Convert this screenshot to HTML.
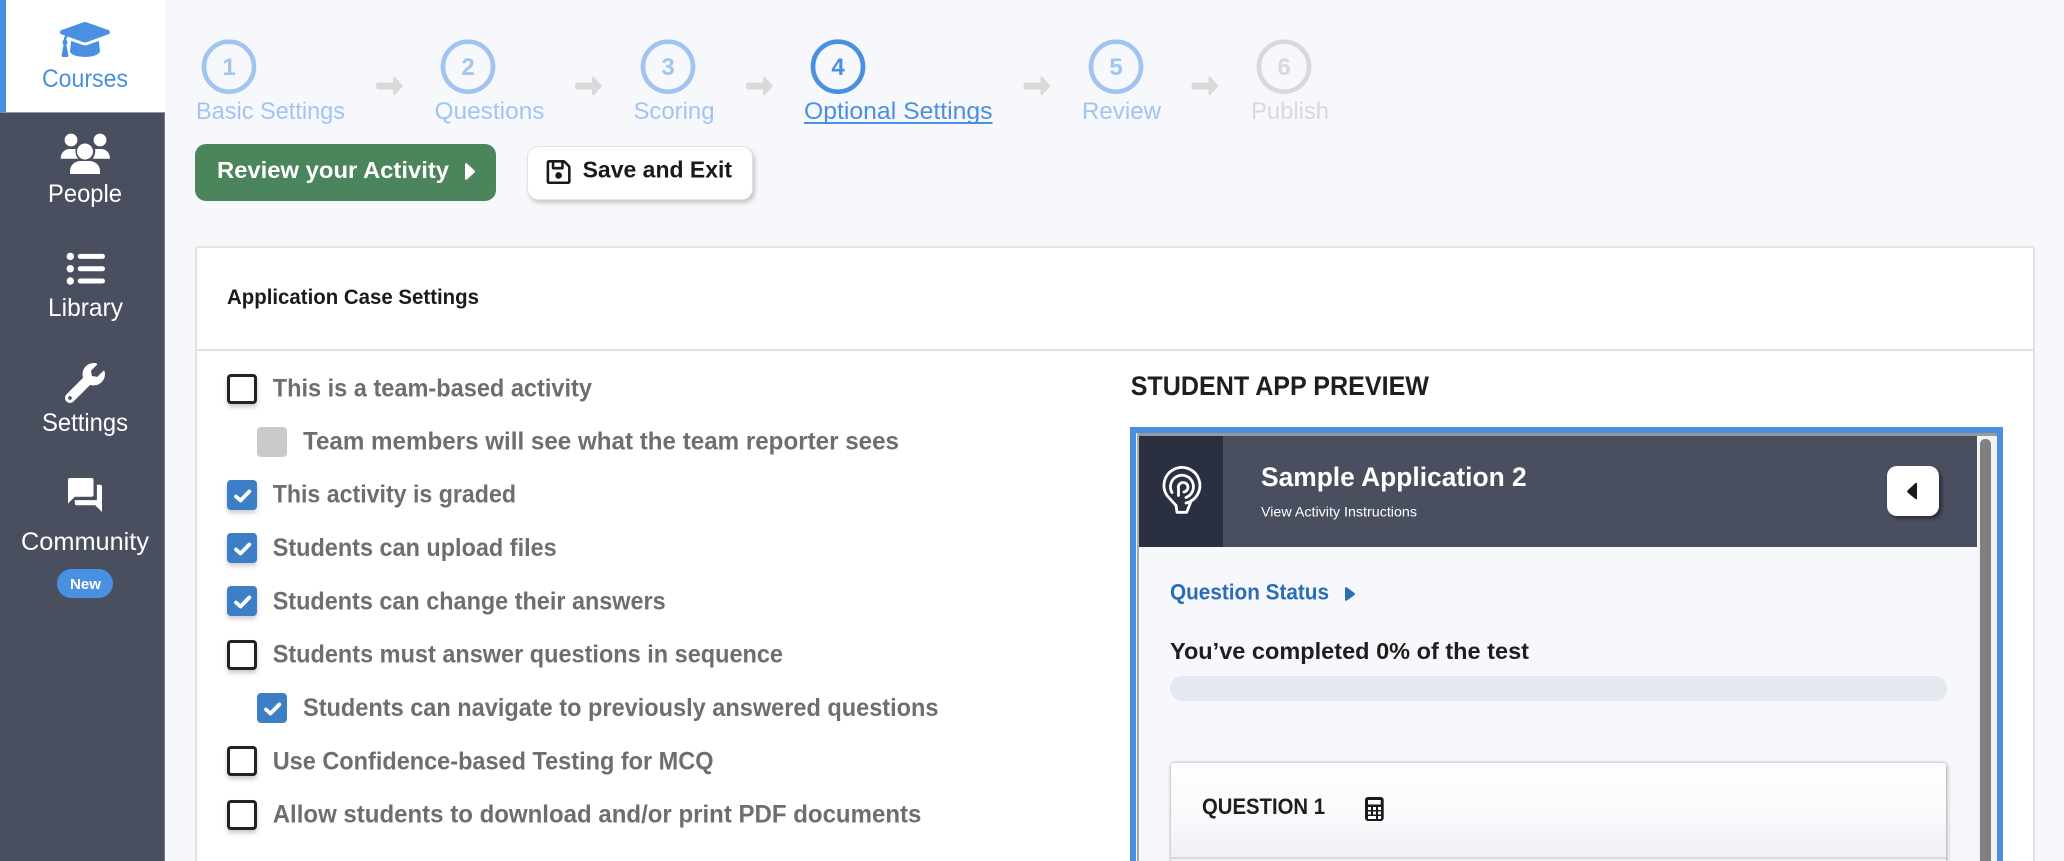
<!DOCTYPE html>
<html lang="en">
<head>
<meta charset="utf-8">
<title>Application Case Settings</title>
<style>
html,body{margin:0;padding:0;width:2064px;height:861px;overflow:hidden;background:#f7f8fb;font-family:"Liberation Sans",sans-serif}
#r{position:absolute;left:0;top:0;width:2064px;height:861px;overflow:hidden;background:#f7f8fb}
.b{position:absolute;box-sizing:border-box}
svg{position:absolute;left:0;top:0}
text{font-family:"Liberation Sans",sans-serif}
.cb{position:absolute;box-sizing:border-box;width:30px;height:30px;border-radius:4px}
.e{border:3px solid #222;background:#fff;box-shadow:0 3px 5px rgba(0,0,0,.22)}
.c{background:#3d7fc7;box-shadow:0 3px 5px rgba(0,0,0,.2)}
.d{background:#c9c9c9}
</style>
</head>
<body>
<div id="r">
<div class="b" style="left:0;top:0;width:165px;height:861px;background:#4a4f5f;border-right:1px solid #777b86"></div>
<div class="b" style="left:0;top:0;width:165px;height:113px;background:#fff;border-left:6px solid #4a90e2;border-bottom:1px solid #999"></div>

<div class="b" style="left:195px;top:246px;width:1840px;height:615px;background:#fff;border:2px solid #e3e3e6;border-bottom:0;border-radius:4px 4px 0 0"></div>
<div class="b" style="left:197px;top:349px;width:1836px;height:2px;background:#dedee0"></div>

<div class="b" style="left:195px;top:144px;width:301px;height:57px;background:#4a855c;border-radius:11px"></div>
<div class="b" style="left:527px;top:145.500px;width:226px;height:54px;background:#fff;border:1.5px solid #e2e2e2;border-radius:11px;box-shadow:2px 3px 4px rgba(0,0,0,.2)"></div>

<div class="cb e" style="left:227px;top:374px"></div>
<div class="cb d" style="left:257px;top:427px"></div>
<div class="cb c" style="left:227px;top:480px"></div>
<div class="cb c" style="left:227px;top:533px"></div>
<div class="cb c" style="left:227px;top:586px"></div>
<div class="cb e" style="left:227px;top:640px"></div>
<div class="cb c" style="left:257px;top:693px;box-shadow:none"></div>
<div class="cb e" style="left:227px;top:746px"></div>
<div class="cb e" style="left:227px;top:800px"></div>

<!-- preview -->
<div class="b" style="left:1130px;top:427px;width:873px;height:460px;background:#f1f2f3;border:6.5px solid #4a90e2"></div>
<div class="b" style="left:1137px;top:433px;width:860px;height:3px;background:#999"></div>
<div class="b" style="left:1137px;top:433px;width:2px;height:430px;background:#aaa"></div>
<div class="b" style="left:1139px;top:436px;width:838px;height:430px;background:#f7f8fb"></div>
<div class="b" style="left:1139px;top:436px;width:838px;height:111px;background:#4a4f5f"></div>
<div class="b" style="left:1139px;top:436px;width:84px;height:111px;background:#2a3040"></div>
<div class="b" style="left:1980px;top:439px;width:11px;height:430px;background:#808080;border-radius:5px"></div>
<div class="b" style="left:1887px;top:466px;width:52px;height:50px;background:#fff;border-radius:10px;box-shadow:3px 3px 3px rgba(10,10,15,.45)"></div>
<div class="b" style="left:1170px;top:676px;width:777px;height:25px;background:#e6e8f1;border-radius:12px"></div>
<div class="b" style="left:1171px;top:763px;width:775px;height:110px;background:linear-gradient(#fff,#fbfbfd 40%,#f0f1f6 94px);border-radius:3px;box-shadow:0 -1px 2px rgba(0,0,0,.08),2px 1px 4px rgba(0,0,0,.2),-1px 0 3px rgba(0,0,0,.16)"></div>
<div class="b" style="left:1171px;top:857px;width:775px;height:2px;background:#d9d9db"></div>

<svg width="2064" height="861" viewBox="0 0 2064 861" xmlns="http://www.w3.org/2000/svg">
<!-- sidebar icons -->
<g transform="translate(60,16.2) scale(.078,.091)" fill="#4a90e2"><path d="M622.34 153.2L343.4 67.5c-15.2-4.67-31.6-4.67-46.79 0L17.66 153.2c-23.54 7.23-23.54 38.36 0 45.59l48.63 14.94c-10.67 13.19-17.23 29.28-17.88 46.9C38.78 266.15 32 276.11 32 288c0 10.78 5.68 19.85 13.86 25.65L20.33 428.53C18.11 438.52 25.71 448 35.94 448h56.11c10.24 0 17.84-9.48 15.62-19.47L82.14 313.65C90.32 307.85 96 298.78 96 288c0-11.57-6.47-21.25-15.66-26.87.76-15.02 8.44-28.3 20.69-36.72L296.6 284.5c9.06 2.78 26.44 6.25 46.79 0l278.95-85.7c23.55-7.24 23.55-38.36 0-45.6zM352.79 315.09c-28.53 8.76-52.84 3.92-65.59 0l-145.02-44.55L128 384c0 35.35 85.96 64 192 64s192-28.65 192-64l-14.18-113.47-145.03 44.56z"/></g>
<g fill="#fff">
<circle cx="71" cy="140" r="6.4"/><circle cx="100" cy="140" r="6.4"/>
<path d="M60.7 158.7c0-6 4-9.7 9-9.7h6c-.8 3 .3 7 2.5 9.7zM110 158.7c0-6-4-9.7-9-9.7h-6c.8 3-.3 7-2.5 9.7z"/>
<circle cx="85" cy="151.5" r="8"/>
<path d="M70 174v-3c0-6 5-10 11-10h8c6 0 11 4 11 10v3z"/>
<circle cx="70.3" cy="256.4" r="3.7"/><circle cx="70.3" cy="268.7" r="3.7"/><circle cx="70.3" cy="281" r="3.7"/>
<rect x="77.7" y="253.9" width="27.3" height="5" rx="2.5"/><rect x="77.7" y="266.2" width="27.3" height="5" rx="2.5"/><rect x="77.7" y="278.5" width="27.3" height="5" rx="2.5"/>
<g transform="translate(65,363) scale(.078)"><path d="M507.73 109.1c-2.24-9.03-13.54-12.09-20.12-5.51l-74.36 74.36-67.88-11.31-11.31-67.88 74.36-74.36c6.62-6.62 3.43-17.9-5.66-20.16-47.38-11.74-99.55.91-136.58 37.93-39.64 39.64-50.55 97.1-34.05 147.2L18.74 402.76c-24.99 24.99-24.99 65.51 0 90.5 24.99 24.99 65.51 24.99 90.5 0l213.21-213.21c50.12 16.71 107.47 5.68 147.37-34.22 37.07-37.07 49.7-89.32 37.91-136.73zM64 472c-13.25 0-24-10.75-24-24 0-13.26 10.75-24 24-24s24 10.74 24 24c0 13.25-10.75 24-24 24z"/></g>
<g transform="translate(64.6,474.6) scale(1.7)"><path d="M21 6h-2v9H6v2c0 .55.45 1 1 1h11l4 4V7c0-.55-.45-1-1-1zm-4 6V3c0-.55-.45-1-1-1H3c-.55 0-1 .45-1 1v14l4-4h10c.55 0 1-.45 1-1z"/></g>
</g>
<rect x="57" y="569" width="56" height="29" rx="14.5" fill="#4a90e2"/>
<g font-size="25">
<text x="42" y="87" fill="#4a90e2" textLength="86" lengthAdjust="spacingAndGlyphs">Courses</text>
<text x="48" y="202" fill="#fff" textLength="74" lengthAdjust="spacingAndGlyphs">People</text>
<text x="48" y="316" fill="#fff" textLength="75" lengthAdjust="spacingAndGlyphs">Library</text>
<text x="42" y="431" fill="#fff" textLength="86" lengthAdjust="spacingAndGlyphs">Settings</text>
<text x="21" y="550" fill="#fff" textLength="128" lengthAdjust="spacingAndGlyphs">Community</text>
</g>
<text x="70" y="589" fill="#fff" font-size="15" font-weight="700" textLength="31" lengthAdjust="spacingAndGlyphs">New</text>

<!-- steps -->
<g fill="none" stroke-width="4.7">
<circle cx="229" cy="66.7" r="25" stroke="#a0c5f1"/>
<circle cx="468" cy="66.7" r="25" stroke="#a0c5f1"/>
<circle cx="668" cy="66.7" r="25" stroke="#a0c5f1"/>
<circle cx="838" cy="66.7" r="25" stroke="#4a90e2"/>
<circle cx="1116" cy="66.7" r="25" stroke="#a0c5f1"/>
<circle cx="1284" cy="66.7" r="25" stroke="#d9d9d9"/>
</g>
<g font-size="24" font-weight="700" text-anchor="middle">
<text x="229" y="75" fill="#a0c5f1">1</text>
<text x="468" y="75" fill="#a0c5f1">2</text>
<text x="668" y="75" fill="#a0c5f1">3</text>
<text x="838" y="75" fill="#4a90e2">4</text>
<text x="1116" y="75" fill="#a0c5f1">5</text>
<text x="1284" y="75" fill="#d9d9d9">6</text>
</g>
<g font-size="24">
<text x="196" y="119" fill="#a0c5f1" textLength="149" lengthAdjust="spacingAndGlyphs">Basic Settings</text>
<text x="434.5" y="119" fill="#a0c5f1" textLength="110" lengthAdjust="spacingAndGlyphs">Questions</text>
<text x="633.5" y="119" fill="#a0c5f1" textLength="81" lengthAdjust="spacingAndGlyphs">Scoring</text>
<text x="804" y="119" fill="#4a90e2" textLength="188.5" lengthAdjust="spacingAndGlyphs">Optional Settings</text>
<text x="1082" y="119" fill="#a0c5f1" textLength="79" lengthAdjust="spacingAndGlyphs">Review</text>
<text x="1251" y="119" fill="#d9d9d9" textLength="78" lengthAdjust="spacingAndGlyphs">Publish</text>
</g>
<rect x="804" y="122" width="188.5" height="2" fill="#4a90e2"/>
<defs><path id="ar" d="M2 -3.5H17V-9L19 -9L27 0L19 9L17 9V3.5H2Q0 3.5 0 0Q0 -3.5 2 -3.5Z" fill="#d9d9d9"/></defs>
<use href="#ar" x="376" y="86"/><use href="#ar" x="575" y="86"/><use href="#ar" x="746" y="86"/><use href="#ar" x="1023.5" y="86"/><use href="#ar" x="1191.5" y="86"/>

<!-- buttons -->
<text x="217" y="178" fill="#fff" font-size="23.5" font-weight="700" textLength="232" lengthAdjust="spacingAndGlyphs">Review your Activity</text>
<path d="M465 164.500Q465 162.500 467 163.500L474.500 170.500Q475.500 171.500 474.500 172.500L467 179.500Q465 180.500 465 178.500Z" fill="#fff"/>
<g transform="translate(546.6,158.3) scale(.0536)" fill="#1a1a1a"><path d="M433.941 129.941l-83.882-83.882A48 48 0 0 0 316.118 32H48C21.49 32 0 53.49 0 80v352c0 26.51 21.49 48 48 48h352c26.51 0 48-21.49 48-48V163.882a48 48 0 0 0-14.059-33.941zM272 80v80H144V80h128zm122 352H54a6 6 0 0 1-6-6V86a6 6 0 0 1 6-6h42v104c0 13.255 10.745 24 24 24h176c13.255 0 24-10.745 24-24V83.882l78.243 78.243a6 6 0 0 1 1.757 4.243V426a6 6 0 0 1-6 6z"/><circle cx="224" cy="320" r="62"/></g>
<text x="582.600" y="177.7" fill="#1a1a1a" font-size="23.5" font-weight="700" textLength="149.5" lengthAdjust="spacingAndGlyphs">Save and Exit</text>

<text x="227" y="304" fill="#1a1a1a" font-size="21.5" font-weight="700" textLength="252" lengthAdjust="spacingAndGlyphs">Application Case Settings</text>

<!-- checkbox labels -->
<g font-size="25" font-weight="700" fill="#6e6e6e">
<text x="272.700" y="396.500" textLength="319.300" lengthAdjust="spacingAndGlyphs">This is a team-based activity</text>
<text x="303" y="449.500" textLength="596" lengthAdjust="spacingAndGlyphs">Team members will see what the team reporter sees</text>
<text x="272.700" y="502.500" textLength="243.300" lengthAdjust="spacingAndGlyphs">This activity is graded</text>
<text x="272.700" y="556" textLength="284" lengthAdjust="spacingAndGlyphs">Students can upload files</text>
<text x="272.700" y="609.300" textLength="393" lengthAdjust="spacingAndGlyphs">Students can change their answers</text>
<text x="272.700" y="662.300" textLength="510.300" lengthAdjust="spacingAndGlyphs">Students must answer questions in sequence</text>
<text x="303" y="716" textLength="635.500" lengthAdjust="spacingAndGlyphs">Students can navigate to previously answered questions</text>
<text x="272.700" y="769.300" textLength="440.800" lengthAdjust="spacingAndGlyphs">Use Confidence-based Testing for MCQ</text>
<text x="272.700" y="822.300" textLength="648.700" lengthAdjust="spacingAndGlyphs">Allow students to download and/or print PDF documents</text>
</g>
<g fill="none" stroke="#fff" stroke-width="3.800" stroke-linecap="round" stroke-linejoin="round">
<path d="M236 496.500l4.500 4 8.800-9"/>
<path d="M236 549.500l4.500 4 8.800-9"/>
<path d="M236 602.500l4.500 4 8.800-9"/>
<path d="M266 709.500l4.500 4 8.800-9"/>
</g>

<!-- preview contents -->
<text x="1130.700" y="395" fill="#1e1e1e" font-size="26.500" font-weight="700" textLength="298.300" lengthAdjust="spacingAndGlyphs">STUDENT APP PREVIEW</text>
<g fill="none" stroke="#fff" stroke-width="2.800" stroke-linecap="round" stroke-linejoin="round">
<path d="M1176 505.500L1167 495.500A18 18 0 1 1 1186 503"/>
<path d="M1176 505.500L1177 512.300H1186.700L1190.500 502.500"/>
<path d="M1172 492.500A11.500 11.500 0 1 1 1186 497.500"/>
<path d="M1178.500 495.500V488.500A4.800 4.800 0 1 1 1184 492"/>
</g>
<text x="1261" y="486" fill="#fff" font-size="26.500" font-weight="700" textLength="265.700" lengthAdjust="spacingAndGlyphs">Sample Application 2</text>
<text x="1261" y="516.700" fill="#fff" font-size="14" textLength="156" lengthAdjust="spacingAndGlyphs">View Activity Instructions</text>
<path d="M1917 483.500V498.500Q1917 500 1915.500 499L1907.500 492.500Q1907 491 1907.500 490.500L1915.500 483Q1917 482.500 1917 483.500Z" fill="#1a1a1a"/>
<text x="1170" y="599.500" fill="#2b6cb8" font-size="22.500" font-weight="700" textLength="159" lengthAdjust="spacingAndGlyphs">Question Status</text>
<path d="M1345 588.500Q1345 586.500 1347 587.500L1354.500 593Q1355.500 594 1354.500 595L1347 600.500Q1345 601.500 1345 599.500Z" fill="#2b6cb8"/>
<text x="1170" y="659" fill="#1e1e1e" font-size="23" font-weight="700" textLength="359" lengthAdjust="spacingAndGlyphs">You’ve completed 0% of the test</text>
<text x="1202" y="814" fill="#1e1e1e" font-size="22" font-weight="700" textLength="123" lengthAdjust="spacingAndGlyphs">QUESTION 1</text>
<rect x="1365" y="797" width="18.700" height="24" rx="3" fill="#1a1a1a"/>
<rect x="1368" y="800" width="12.700" height="4.500" fill="#fff"/>
<g fill="#fff">
<rect x="1368" y="807" width="3" height="3"/><rect x="1373" y="807" width="3" height="3"/><rect x="1378" y="807" width="3" height="3"/>
<rect x="1368" y="811.500" width="3" height="3"/><rect x="1373" y="811.500" width="3" height="3"/><rect x="1378" y="811.500" width="3" height="3"/>
<rect x="1368" y="816" width="8" height="3"/><rect x="1378" y="816" width="3" height="3"/>
</g>
</svg>
</div>
</body>
</html>
